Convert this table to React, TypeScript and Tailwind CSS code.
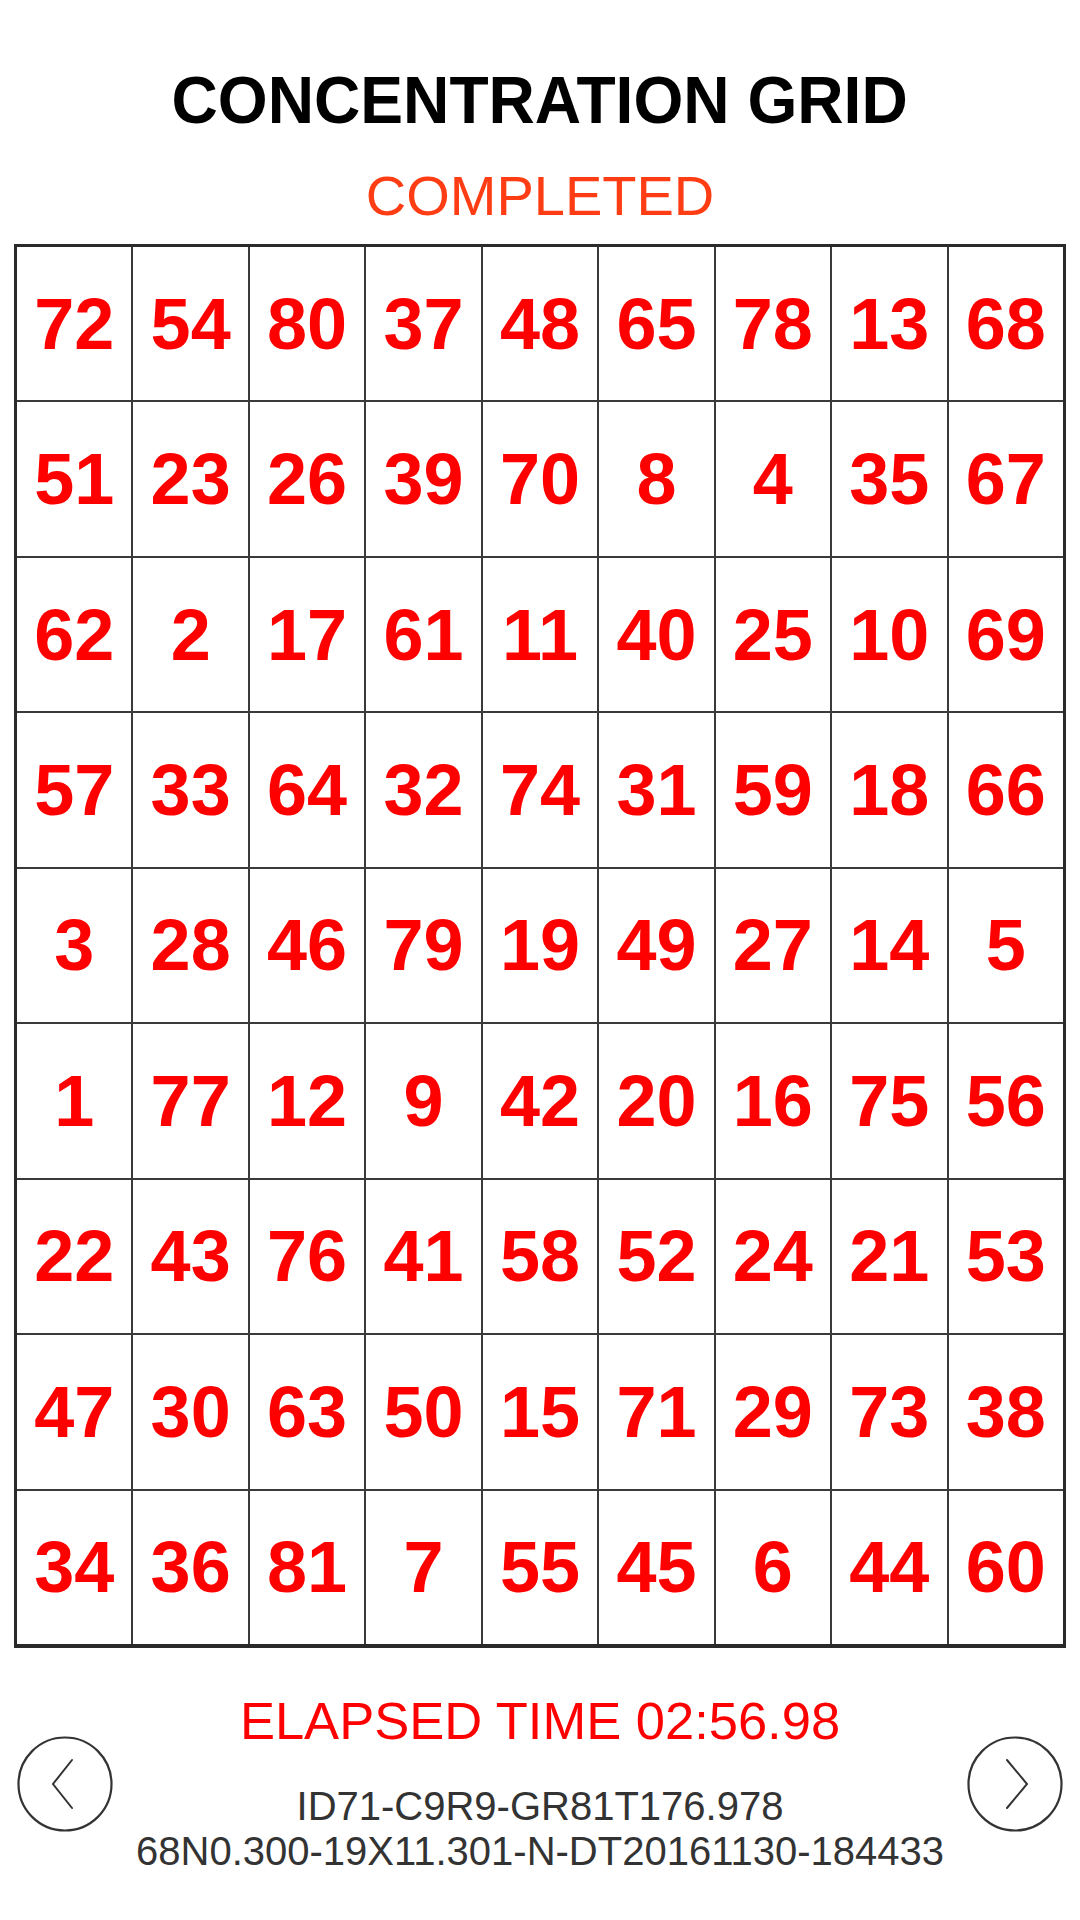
import React from "react";

const GRID: number[][] = [
  [72, 54, 80, 37, 48, 65, 78, 13, 68],
  [51, 23, 26, 39, 70, 8, 4, 35, 67],
  [62, 2, 17, 61, 11, 40, 25, 10, 69],
  [57, 33, 64, 32, 74, 31, 59, 18, 66],
  [3, 28, 46, 79, 19, 49, 27, 14, 5],
  [1, 77, 12, 9, 42, 20, 16, 75, 56],
  [22, 43, 76, 41, 58, 52, 24, 21, 53],
  [47, 30, 63, 50, 15, 71, 29, 73, 38],
  [34, 36, 81, 7, 55, 45, 6, 44, 60],
];

const font = { fontFamily: '"Liberation Sans", Arial, sans-serif' };

function CircleArrow({ dir }: { dir: "left" | "right" }) {
  const pts = dir === "left" ? "55,24 36,48 55,72" : "40,24 60,48 40,72";
  return (
    <svg width="96" height="96" viewBox="0 0 96 96" className="shrink-0">
      <circle cx="48" cy="48" r="46.5" fill="none" stroke="#333" strokeWidth="2.2" />
      <polyline points={pts} fill="none" stroke="#333" strokeWidth="2" strokeLinecap="round" strokeLinejoin="miter" />
    </svg>
  );
}

export default function App() {
  return (
    <div className="w-[1080px] h-[1920px] bg-white flex flex-col pt-[66px]" style={font}>
      <div className="flex justify-center">
        <h1 className="inline-block text-[67px] leading-none font-bold text-black scale-x-[0.957]">
          CONCENTRATION GRID
        </h1>
      </div>
      <div className="text-center text-[56px] leading-none text-[#ff3d14] mt-[35px]">COMPLETED</div>
      <div className="mx-[14px] mt-[20px] h-[1404px] border-[3px] border-b-4 border-[#2a2a2a] bg-[#3a3a3a] grid grid-cols-9 grid-rows-9 gap-[2px]">
        {GRID.flat().map((n, i) => (
          <div key={i} className="bg-white flex items-center justify-center">
            <span className="text-[72px] leading-none font-bold text-[#ff0000]">{n}</span>
          </div>
        ))}
      </div>
      <div className="mt-[47px] flex items-center justify-between px-[17px]">
        <CircleArrow dir="left" />
        <div className="flex flex-col items-center">
          <div className="text-[52.5px] leading-none text-[#ff0000]">ELAPSED TIME 02:56.98</div>
          <div className="mt-[36px] text-[40px] leading-[45px] text-[#333] text-center">
            <div>ID71-C9R9-GR81T176.978</div>
            <div>68N0.300-19X11.301-N-DT20161130-184433</div>
          </div>
        </div>
        <CircleArrow dir="right" />
      </div>
    </div>
  );
}
